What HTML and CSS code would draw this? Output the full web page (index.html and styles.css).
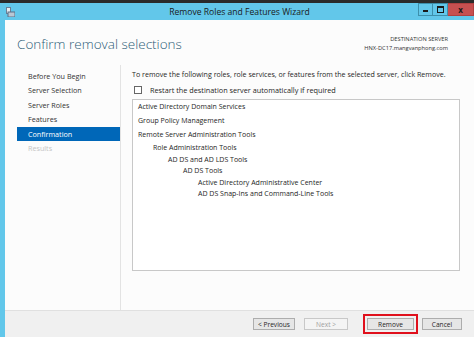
FILE: index.html
```html
<!DOCTYPE html>
<html lang="en">
<head>
  <meta charset="UTF-8" />
  <title>Remove Roles and Features Wizard</title>
  <link rel="stylesheet" href="styles.css">
</head>
<body>
  <div class="janela">
    <div class="barra-titulo">
      <svg class="icone-app" width="9" height="10" viewBox="0 0 9 10">
        <rect x="0.5" y="0.5" width="4" height="6" fill="#e9eef3" stroke="#6a7f96" stroke-width="1"/>
        <rect x="2" y="5" width="7" height="5" fill="#b9c7d4" stroke="#5a6f86" stroke-width="1"/>
      </svg>
      <span class="titulo-janela">Remove Roles and Features Wizard</span>
      <div class="controles">
        <span class="ctrl"><i class="ctrl-min"></i></span>
        <span class="ctrl"><i class="ctrl-max"></i></span>
        <span class="ctrl ctrl-fechar">x</span>
      </div>
    </div>

    <div class="corpo">
      <div class="cabecalho">
        <h1>Confirm removal selections</h1>
        <div class="destino">
          <div>DESTINATION SERVER</div>
          <div>HNX-DC17.mangvanphong.com</div>
        </div>
      </div>

      <div class="principal">
        <ul class="passos">
          <li>Before You Begin</li>
          <li>Server Selection</li>
          <li>Server Roles</li>
          <li>Features</li>
          <li class="ativo">Confirmation</li>
          <li class="inativo">Results</li>
        </ul>

        <div class="conteudo">
          <p class="descricao">To remove the following roles, role services, or features from the selected server, click Remove.</p>
          <label class="reiniciar"><span class="caixa"></span>Restart the destination server automatically if required</label>

          <div class="lista">
            <div class="item topo">Active Directory Domain Services</div>
            <div class="item topo">Group Policy Management</div>
            <div class="item topo">Remote Server Administration Tools</div>
            <div class="item n1">Role Administration Tools</div>
            <div class="item n2">AD DS and AD LDS Tools</div>
            <div class="item n3">AD DS Tools</div>
            <div class="item n4">Active Directory Administrative Center</div>
            <div class="item n4">AD DS Snap-Ins and Command-Line Tools</div>
          </div>
        </div>
      </div>

      <div class="rodape">
        <button class="btn btn-anterior">&lt; Previous</button>
        <button class="btn btn-proximo desativado">Next &gt;</button>
        <span class="destaque"><button class="btn">Remove</button></span>
        <button class="btn btn-cancelar">Cancel</button>
      </div>
    </div>
  </div>
</body>
</html>
```

FILE: styles.css
```css
body {
  margin: 0;
  width: 474px;
  height: 337px;
  overflow: hidden;
  background-color: #2b2b2b;
  font-family: "Open Sans", "Noto Sans", sans-serif;
}

.janela {
  margin-top: 3px;
  height: 334px;
  background-color: #62c7ea;
  padding-left: 5px;
  display: flex;
  flex-direction: column;
}

/* Barra de titulo */
.barra-titulo {
  height: 17px;
  display: flex;
  align-items: center;
  position: relative;
}

.icone-app {
  margin-left: 1px;
}

.titulo-janela {
  position: absolute;
  left: 0;
  right: 0;
  text-align: center;
  font-size: 8.6px;
  color: #1a1a1a;
}

.controles {
  position: absolute;
  right: 0;
  top: 0;
  display: flex;
}

.ctrl {
  width: 15px;
  height: 13px;
  border: 1px solid #3d8fab;
  border-left: none;
  display: flex;
  justify-content: center;
  align-items: center;
  box-sizing: border-box;
}

.ctrl:first-child {
  border-left: 1px solid #3d8fab;
}

.ctrl-min {
  width: 5px;
  height: 2px;
  margin-top: 3px;
  background-color: #1a1a1a;
}

.ctrl-max {
  width: 5px;
  height: 4px;
  border: 1px solid #1a1a1a;
  border-top-width: 2px;
}

.ctrl-fechar {
  width: 26px;
  background-color: #c75050;
  border-color: #b04040;
  color: #1a1a1a;
  font-size: 8px;
  font-weight: 700;
}

/* Corpo */
.corpo {
  flex: 1;
  background-color: #fcfcfc;
  display: flex;
  flex-direction: column;
}

.cabecalho {
  height: 45px;
  display: flex;
  justify-content: space-between;
  align-items: flex-start;
}

.cabecalho h1 {
  margin: 15px 0 0 12px;
  font-size: 13.5px;
  font-weight: 300;
  color: #2c5d78;
}

.destino {
  margin-top: 15px;
  margin-right: 26px;
  text-align: right;
  font-size: 5.7px;
  line-height: 8.5px;
  color: #333;
}

.principal {
  flex: 1;
  display: flex;
}

.passos {
  list-style: none;
  margin: 0;
  padding: 4px 0 0 12px;
  width: 103px;
  border-right: 1px solid #e3e3e3;
}

.passos li {
  height: 14.4px;
  line-height: 14.4px;
  padding-left: 11px;
  font-size: 7.2px;
  color: #333;
}

.passos li.ativo {
  background-color: #0067b8;
  color: #fff;
}

.passos li.inativo {
  color: #c5c5c5;
}

.conteudo {
  flex: 1;
  padding: 3px 14px 0 11px;
  color: #1e1e1e;
}

.descricao {
  margin: 0;
  font-size: 7.1px;
  line-height: 12px;
}

.reiniciar {
  display: flex;
  align-items: center;
  margin: 5px 0 0 2px;
  font-size: 7.3px;
  height: 10px;
}

.caixa {
  width: 6px;
  height: 6px;
  border: 1px solid #666;
  background-color: #fff;
  margin-right: 8px;
}

.lista {
  margin-top: 4px;
  height: 170px;
  border: 1px solid #c8c8c8;
  background-color: #fff;
  padding-left: 5px;
}

.item {
  font-size: 7px;
  white-space: nowrap;
}

.item.topo {
  height: 14px;
  line-height: 14px;
}

.item.n1,
.item.n2,
.item.n3,
.item.n4 {
  height: 11.6px;
  line-height: 11.6px;
}

.item.n1 { padding-left: 15px; }
.item.n2 { padding-left: 30px; }
.item.n3 { padding-left: 45px; }
.item.n4 { padding-left: 60px; }

/* Rodape */
.rodape {
  height: 26px;
  border-top: 1px solid #e0e0e0;
  background-color: #f0f0f0;
  display: flex;
  align-items: center;
  justify-content: flex-end;
  padding-right: 12px;
}

.btn {
  height: 12px;
  width: 42px;
  padding: 0;
  border: 1px solid #adadad;
  background-color: #e6e6e6;
  font-family: "Open Sans", "Noto Sans", sans-serif;
  font-size: 6.6px;
  color: #1e1e1e;
}

.btn-proximo {
  width: 44px;
  margin-left: 9px;
}

.btn-cancelar {
  width: 40px;
  margin-left: 4px;
}

.btn.desativado {
  color: #a0a0a0;
  border-color: #c8c8c8;
  background-color: #f4f4f4;
}

.destaque {
  margin-left: 15px;
  border: 2px solid #e0101c;
  padding: 2px 2px;
  display: flex;
}

.destaque .btn {
  width: 47px;
}
```
